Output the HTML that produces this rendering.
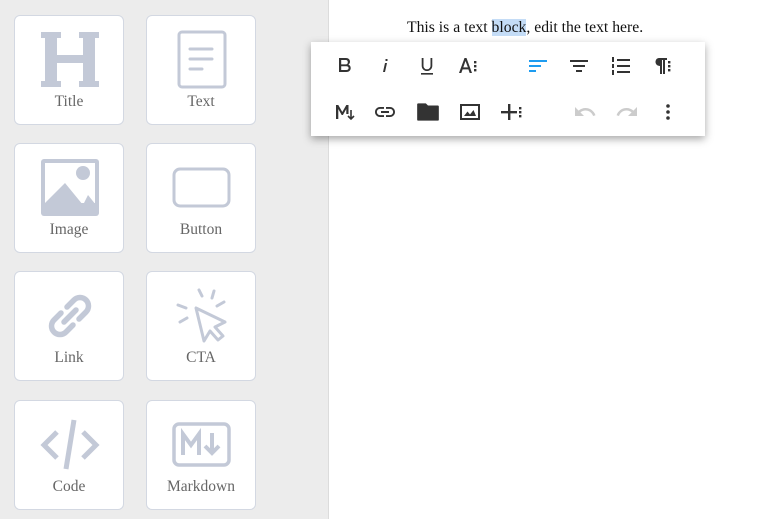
<!DOCTYPE html>
<html><head><meta charset="utf-8"><style>
*{margin:0;padding:0;box-sizing:border-box}
body{width:768px;height:519px;overflow:hidden;background:#fff;position:relative;font-family:"Liberation Serif",serif}
#side{position:absolute;left:0;top:0;width:329px;height:519px;background:#ececec;border-right:1px solid #dcdcdc}
.card{position:absolute;width:110px;height:110px;background:#fff;border:1px solid #d3d8e2;border-radius:6px}
.card svg{position:absolute;left:25px;top:14px}
.card span{position:absolute;left:0;right:0;top:77px;text-align:center;font-size:15.5px;color:#666}
#txt{position:absolute;left:407px;top:19px;font-size:15.7px;color:#111}
#txt b{font-weight:normal;background:#c4dcf6}
#tb{position:absolute;left:311px;top:42px;width:394px;height:94px;background:#fff;box-shadow:0 3px 8px rgba(0,0,0,.35)}
#tb svg{position:absolute}
</style></head><body>
<div id="side">
<div class="card" style="left:14px;top:15px"><svg width="60" height="60" viewBox="0 0 60 60"><g fill="#c3c9d7"><rect x="1" y="2" width="20" height="6"/><rect x="39" y="2" width="20" height="6"/><rect x="1" y="51" width="20" height="6"/><rect x="39" y="51" width="20" height="6"/><rect x="5" y="2" width="12" height="55"/><rect x="43" y="2" width="12" height="55"/><rect x="5" y="25" width="50" height="8"/></g></svg><span>Title</span></div>
<div class="card" style="left:146px;top:15px"><svg width="60" height="60" viewBox="0 0 60 60"><rect x="7" y="2" width="46" height="55" rx="3" fill="none" stroke="#c3c9d7" stroke-width="3"/><path d="M18 19h22M18 29h22M18 39h12" stroke="#c3c9d7" stroke-width="3" stroke-linecap="round"/></svg><span>Text</span></div>
<div class="card" style="left:14px;top:143px"><svg width="60" height="60" viewBox="0 0 60 60"><rect x="1" y="1" width="58" height="57" rx="3" fill="#c3c9d7"/><rect x="5" y="5" width="50" height="40" fill="#fff"/><circle cx="43" cy="15" r="7" fill="#c3c9d7"/><path d="M5 45l20-20 18 22 5-10 8 10v10H5z" fill="#c3c9d7"/></svg><span>Image</span></div>
<div class="card" style="left:146px;top:143px"><svg width="60" height="60" viewBox="0 0 60 60"><rect x="2" y="11" width="55" height="37" rx="6" fill="none" stroke="#c3c9d7" stroke-width="3"/></svg><span>Button</span></div>
<div class="card" style="left:14px;top:271px"><svg width="60" height="60" viewBox="0 0 60 60"><g fill="none" stroke="#c3c9d7" stroke-width="5.5" stroke-linecap="round"><path d="M27 21l7-7a8 8 0 0 1 12 12l-7 7"/><path d="M33 39l-7 7a8 8 0 0 1-12-12l7-7"/><path d="M24 36l12-12"/></g></svg><span>Link</span></div>
<div class="card" style="left:146px;top:271px"><svg width="60" height="60" viewBox="0 0 60 60"><g fill="none" stroke="#c3c9d7" stroke-width="3" stroke-linecap="round" stroke-linejoin="round"><path d="M27 4l3 6M42 5l-2 7M52 16l-7 4M6 19l8 3M8 36l7-4"/><path d="M24 22l8 33 6-10 8 9 5-4-8-9 10-5z"/></g></svg><span>CTA</span></div>
<div class="card" style="left:14px;top:400px"><svg width="60" height="60" viewBox="0 0 60 60"><g fill="none" stroke="#c3c9d7" stroke-width="5" stroke-linejoin="miter"><path d="M17 17L4 30l13 13M43 17l13 13-13 13"/><path d="M34 5l-8 49"/></g></svg><span>Code</span></div>
<div class="card" style="left:146px;top:400px"><svg width="60" height="60" viewBox="0 0 60 60"><rect x="2" y="9" width="55" height="41" rx="5" fill="none" stroke="#c3c9d7" stroke-width="3.5"/><path d="M11 40V19l8 11 8-11v21M40 18v20M33 31l7 7 7-7" fill="none" stroke="#c3c9d7" stroke-width="4"/></svg><span>Markdown</span></div>
</div>
<div id="txt">This is a text <b>block</b>, edit the text here.</div>
<div id="tb">
<svg style="left:22px;top:12px" width="24" height="24" viewBox="0 0 24 24"><path fill="#333" d="M6 4h7c2.4 0 4 1.6 4 3.7 0 1.2-.6 2.2-1.6 2.8 1.4.6 2.3 1.9 2.3 3.5 0 2.4-1.8 4-4.3 4H6zm2.2 2v4.4h4.6c1.3 0 2-.9 2-2.2S14.1 6 12.8 6zm0 6.3V16h5.1c1.4 0 2.3-.8 2.3-1.9s-.9-1.8-2.3-1.8z"/></svg>
<svg style="left:62px;top:12px" width="24" height="24" viewBox="0 0 24 24"><path fill="#333" d="M12.5 5h2v2h-2zM12 9h2l-2 9h-2z"/></svg>
<svg style="left:104px;top:12px" width="24" height="24" viewBox="0 0 24 24"><path fill="#333" d="M12 17c3 0 5.3-2.3 5.3-5.3V4h-1.8v7.7c0 2-1.5 3.6-3.5 3.6s-3.5-1.6-3.5-3.6V4H6.7v7.7C6.7 14.7 9 17 12 17zm-6 2v1.6h12V19z"/></svg>
<svg style="left:146px;top:12px" width="24" height="24" viewBox="0 0 24 24"><path fill="#333" d="M7.5 4h2l5.5 15h-2.3l-1.3-3.6H5.6L4.3 19H2zm-1.2 9.4h4.6L8.5 7z"/><rect x="17" y="7" width="2.4" height="2.4" fill="#333"/><rect x="17" y="11" width="2.4" height="2.4" fill="#333"/><rect x="17" y="15" width="2.4" height="2.4" fill="#333"/></svg>
<svg style="left:215px;top:12px" width="24" height="24" viewBox="0 0 24 24"><path fill="#1e9cf0" d="M3 6h18v2H3zM3 11h12v2H3zM3 16h7v2H3z"/></svg>
<svg style="left:256px;top:12px" width="24" height="24" viewBox="0 0 24 24"><path fill="#333" d="M3 6h18v2H3zM6 11h12v2H6zM9 16h6v2H9z"/></svg>
<svg style="left:298px;top:12px" width="24" height="24" viewBox="0 0 24 24"><path fill="#333" d="M8 5h13v2H8zM8 11h13v2H8zM8 17h13v2H8zM3 3h2v5H3zM3 10h2v4H3zM3 16h2v5H3z"/></svg>
<svg style="left:339px;top:12px" width="24" height="24" viewBox="0 0 24 24"><path fill="#333" d="M9 4h8v2h-2v14h-2V6h-1v14H10v-8c-2.5 0-4.5-1.8-4.5-4S7 4 9 4z"/><rect x="18" y="7" width="2.4" height="2.4" fill="#333"/><rect x="18" y="11" width="2.4" height="2.4" fill="#333"/><rect x="18" y="15" width="2.4" height="2.4" fill="#333"/></svg>
<svg style="left:22px;top:58px" width="24" height="24" viewBox="0 0 24 24"><path fill="#333" d="M3 19V5h2.3l4 7 4-7H15.5v9h-2.2V9l-3.4 6h-1.2L5.3 9v10z"/><path d="M18 10v9M15 16l3 3 3-3" fill="none" stroke="#333" stroke-width="1.6"/></svg>
<svg style="left:62px;top:58px" width="24" height="24" viewBox="0 0 24 24"><path fill="#333" d="M3.9 12c0-1.7 1.4-3.1 3.1-3.1h4V7H7c-2.8 0-5 2.2-5 5s2.2 5 5 5h4v-1.9H7c-1.7 0-3.1-1.4-3.1-3.1zM8 13h8v-2H8v2zm9-6h-4v1.9h4c1.7 0 3.1 1.4 3.1 3.1s-1.4 3.1-3.1 3.1h-4V17h4c2.8 0 5-2.2 5-5s-2.2-5-5-5z"/></svg>
<svg style="left:104px;top:57px" width="26" height="26" viewBox="0 0 24 24"><path fill="#333" d="M10 4H3c-.6 0-1 .4-1 1v14c0 .6.4 1 1 1h18c.6 0 1-.4 1-1V7c0-.6-.4-1-1-1h-9z"/></svg>
<svg style="left:147px;top:58px" width="24" height="24" viewBox="0 0 24 24"><path fill="#333" d="M2 4h20v16H2zm2 2v12h16V6zM6 16l3.5-4.5 2.5 3 3.5-4.5L18 16z"/></svg>
<svg style="left:189px;top:58px" width="24" height="24" viewBox="0 0 24 24"><path fill="#333" d="M8 4h2.4v7H17v2.4h-6.6V20H8v-6.6H1V11h7z"/><rect x="19" y="7" width="2.4" height="2.4" fill="#333"/><rect x="19" y="11" width="2.4" height="2.4" fill="#333"/><rect x="19" y="15" width="2.4" height="2.4" fill="#333"/></svg>
<svg style="left:262px;top:58px" width="24" height="24" viewBox="0 0 24 24"><path fill="#ccc" d="M12.5 8c-2.6 0-5 1-6.9 2.6L2 7v9h9l-3.6-3.6c1.4-1.2 3.2-1.9 5.1-1.9 3.5 0 6.5 2.3 7.6 5.5l2.4-.8C21 11 17.1 8 12.5 8z"/></svg>
<svg style="left:304px;top:58px" width="24" height="24" viewBox="0 0 24 24"><path fill="#ccc" d="M18.4 10.6C16.6 9 14.2 8 11.5 8c-4.6 0-8.5 3-9.9 7.2l2.4.8c1-3.2 4-5.5 7.5-5.5 2 0 3.7.7 5.1 1.9L13 16h9V7z"/></svg>
<svg style="left:345px;top:58px" width="24" height="24" viewBox="0 0 24 24"><circle cx="12" cy="6" r="1.8" fill="#333"/><circle cx="12" cy="12" r="1.8" fill="#333"/><circle cx="12" cy="18" r="1.8" fill="#333"/></svg>
</div>
</body></html>
